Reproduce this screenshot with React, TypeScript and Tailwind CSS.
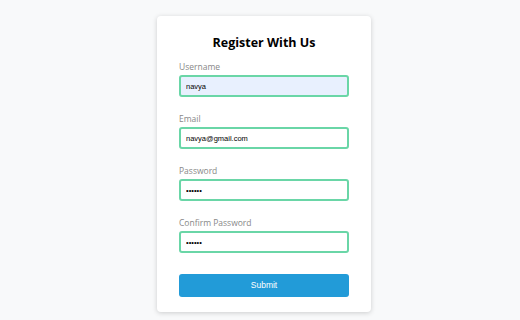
import React from "react";

const fields = [
  { label: "Username", type: "text", value: "navya", filled: true },
  { label: "Email", type: "email", value: "navya@gmail.com" },
  { label: "Password", type: "password", value: "123456" },
  { label: "Confirm Password", type: "password", value: "123456" },
];

export default function App() {
  return (
    <div className="min-h-screen bg-[#f8f9fa] flex justify-center pt-4 pl-2 font-['Open_Sans',sans-serif]">
      <form
        className="w-[214px] h-[296px] bg-white rounded shadow-[0_1px_5px_rgba(0,0,0,0.18)] px-[22px] pt-[17px]"
        onSubmit={(e) => e.preventDefault()}
      >
        <h2 className="text-center text-[12.5px] leading-[20px] font-bold text-black mb-[7px]">
          Register With Us
        </h2>
        {fields.map((f) => (
          <div key={f.label} className="mb-[15px]">
            <label className="block text-[8.5px] leading-[14px] text-[#888] mb-px">{f.label}</label>
            <input
              type={f.type}
              defaultValue={f.value}
              className={`block w-full h-[22px] rounded-[3px] border-2 border-[#6ad6a7] px-[5px] text-[7.5px] text-black font-['Liberation_Sans',sans-serif] outline-none ${
                f.filled ? "bg-[#e8f0fe]" : "bg-white"
              }`}
            />
          </div>
        ))}
        <button
          type="submit"
          className="mt-[6px] w-full h-[23px] rounded-[3px] bg-[#229bd8] text-white text-[8.5px] font-['Liberation_Sans',sans-serif]"
        >
          Submit
        </button>
      </form>
    </div>
  );
}
